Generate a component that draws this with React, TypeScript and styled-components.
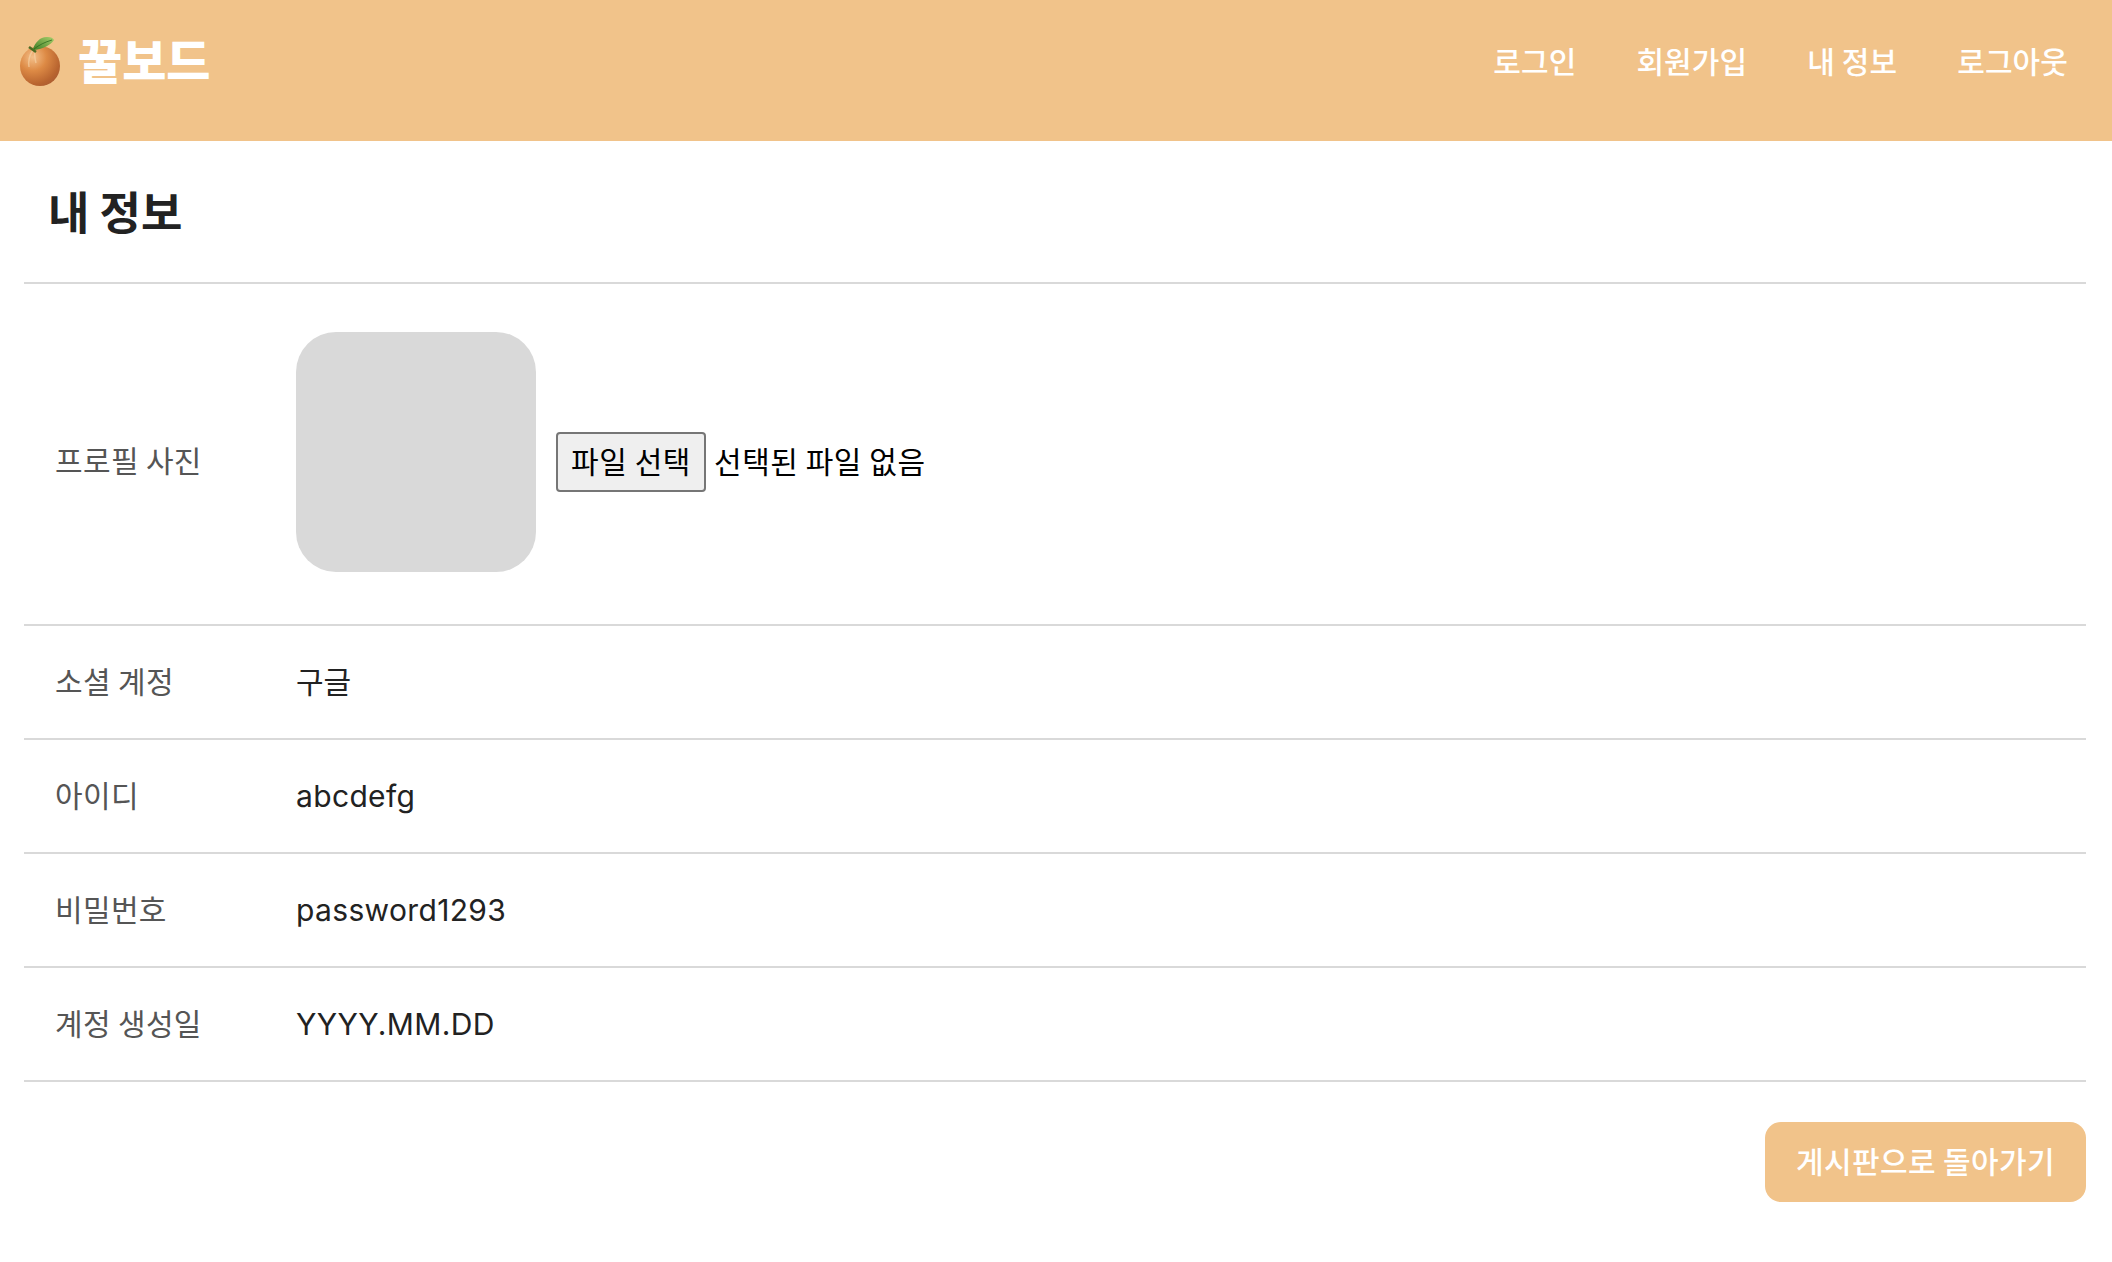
import React from "react";
import styled, { createGlobalStyle } from "styled-components";

const KR = `"Noto Sans CJK KR", sans-serif`;
const Global = createGlobalStyle`
  html, body { margin: 0; padding: 0; background: #fff; }
  body { font-family: Inter, "Noto Sans CJK KR", sans-serif; }
`;
const Header = styled.header`
  height: 141px; background: #f1c38a; display: flex; justify-content: space-between;
  align-items: flex-start; padding: 0 44px 0 20px; box-sizing: border-box;
`;
const Brand = styled.div`
  display: flex; align-items: center; gap: 16px; height: 122px;
  color: #fff; font-family: ${KR}; font-weight: 900; font-size: 48px; line-height: 56px;
`;
const BrandText = styled.span`
  margin-bottom: 6px;
`;
const Nav = styled.nav`
  display: flex; gap: 60px; height: 120px; align-items: center;
`;
const NavItem = styled.a`
  color: #fff; font-size: 30px; font-family: ${KR}; font-weight: 500; letter-spacing: 0.1px;
`;
const Main = styled.main`
  padding: 0 26px 0 24px;
`;
const Title = styled.h1`
  margin: 0; height: 143px; box-sizing: border-box; padding: 42px 0 0 24px; font-size: 45px; line-height: 56px;
  font-family: ${KR}; font-weight: 700; color: #222;
  border-bottom: 2px solid #d9d9d9;
`;
const Row = styled.div<{ $tall?: boolean }>`
  display: flex; align-items: center; box-sizing: border-box;
  height: ${(p) => (p.$tall ? 342 : 114)}px;
  border-bottom: 2px solid #d9d9d9;
  padding-left: 31px;
  padding-bottom: ${(p) => (p.$tall ? 4 : 0)}px;
`;
const Label = styled.div<{ $shift?: number }>`
  width: 241px; flex: none; font-size: 30px; color: #555; font-family: ${KR}; letter-spacing: 0.35px;
  margin-top: ${(p) => p.$shift ?? 0}px; margin-bottom: ${(p) => (p.$shift ? 0 : 5)}px;
`;
const Value = styled.div<{ $ko?: boolean }>`
  font-size: 30px; color: #222; letter-spacing: ${(p) => (p.$ko ? 0 : 0.35)}px;
  font-family: Inter, "Noto Sans CJK KR", sans-serif;
  margin-bottom: ${(p) => (p.$ko ? 5 : 0)}px;
`;
const Avatar = styled.div`
  width: 240px; height: 240px; border-radius: 40px; background: #d9d9d9; flex: none; margin-right: 20px;
`;
const FileButton = styled.button`
  width: 150px; height: 60px; padding: 0 0 4px; background: #efefef; border: 2px solid #767676; border-radius: 4px;
  font-size: 30px; color: #000; font-family: ${KR}; letter-spacing: 0.6px; white-space: nowrap;
  margin-top: 20px;
`;
const FileText = styled.span`
  margin-left: 8px; margin-top: 15px; font-size: 30px; color: #000; font-family: ${KR}; letter-spacing: 0.55px;
`;
const Footer = styled.div`
  display: flex; justify-content: flex-end; padding-top: 40px;
`;
const Back = styled.button`
  width: 321px; height: 80px; border: 0; border-radius: 16px; background: #f1c38a; color: #fff;
  font-size: 30px; font-family: ${KR}; font-weight: 500; letter-spacing: 0.4px; padding: 0 0 4px;
`;
const Orange = () => (
  <svg width="42" height="50" viewBox="0 0 42 50">
    <defs>
      <radialGradient id="o" cx="32%" cy="28%" r="85%">
        <stop offset="0" stopColor="#f4c08a" />
        <stop offset="0.4" stopColor="#dd8a45" />
        <stop offset="0.8" stopColor="#b8642f" />
        <stop offset="1" stopColor="#a85a32" />
      </radialGradient>
      <linearGradient id="l" x1="0" y1="1" x2="1" y2="0">
        <stop offset="0" stopColor="#3f7d25" />
        <stop offset="1" stopColor="#a9d06c" />
      </linearGradient>
    </defs>
    <circle cx="20" cy="30" r="20" fill="url(#o)" />
    <path d="M13 14 C9 20 8 25 9 31 M15 14 C14 19 15 23 16 27" stroke="#f8d9ae" strokeWidth="1.5" fill="none" opacity=".55" />
    <path d="M9 11 L16 16" stroke="#4c6b22" strokeWidth="2.5" fill="none" />
    <path d="M13 13 C15 6 21 0 28 1 C31 1 33 2 34 4 C31 9 23 13 14 14Z" fill="url(#l)" />
    <path d="M14 13 C19 9 25 6 32 4" stroke="#2f6a1f" strokeWidth=".8" fill="none" />
  </svg>
);
export default function App() {
  return (
    <>
      <Global />
      <Header>
        <Brand><Orange /><BrandText>꿀보드</BrandText></Brand>
        <Nav>
          <NavItem>로그인</NavItem>
          <NavItem>회원가입</NavItem>
          <NavItem>내 정보</NavItem>
          <NavItem>로그아웃</NavItem>
        </Nav>
      </Header>
      <Main>
        <Title>내 정보</Title>
        <Row $tall>
          <Label $shift={14}>프로필 사진</Label>
          <Avatar />
          <FileButton>파일 선택</FileButton>
          <FileText>선택된 파일 없음</FileText>
        </Row>
        <Row><Label>소셜 계정</Label><Value $ko>구글</Value></Row>
        <Row><Label>아이디</Label><Value>abcdefg</Value></Row>
        <Row><Label>비밀번호</Label><Value>password1293</Value></Row>
        <Row><Label>계정 생성일</Label><Value>YYYY.MM.DD</Value></Row>
        <Footer><Back>게시판으로 돌아가기</Back></Footer>
      </Main>
    </>
  );
}
